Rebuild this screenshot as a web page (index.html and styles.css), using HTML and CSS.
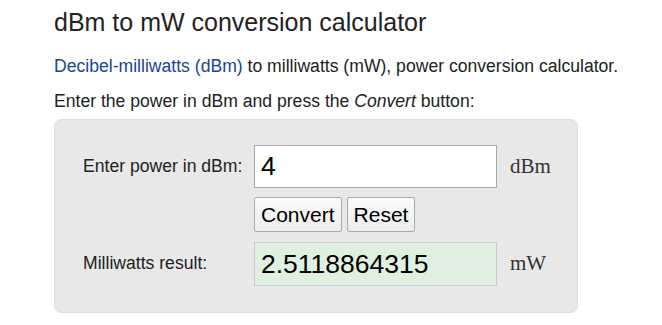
FILE: index.html
```html
<!DOCTYPE html>
<html>
<head>
    <title>dBm to mW conversion calculator</title>
    <link rel="stylesheet" href="styles.css">
</head>
<body>
    <div class="page">
        <h1>dBm to mW conversion calculator</h1>
        <p><a href="#">Decibel-milliwatts (dBm)</a> to milliwatts (mW), power conversion calculator.</p>
        <p>Enter the power in dBm and press the <i>Convert</i> button:</p>
        <form class="calc" onsubmit="convert(event)">
            <label for="dbm">Enter power in dBm:</label>
            <input type="text" id="dbm" class="field" value="4">
            <span class="unit">dBm</span>

            <span></span>
            <div class="buttons">
                <button type="submit">Convert</button>
                <button type="button" onclick="resetForm()">Reset</button>
            </div>
            <span></span>

            <label for="mw">Milliwatts result:</label>
            <input type="text" id="mw" class="field result" value="2.5118864315" readonly>
            <span class="unit">mW</span>
        </form>
    </div>

    <script>
        function convert(event) {
            event.preventDefault();
            const dbm = parseFloat(document.getElementById("dbm").value);
            const mw = Math.pow(10, dbm / 10);
            document.getElementById("mw").value = isNaN(mw) ? "" : +mw.toFixed(10);
        }

        function resetForm() {
            document.getElementById("dbm").value = "";
            document.getElementById("mw").value = "";
        }
    </script>
</body>
</html>
```
FILE: styles.css
```css
body {
    background-color: #fff;
    font-family: Arial, "Liberation Sans", sans-serif;
    color: #222;
    margin: 0;
}

.page {
    padding: 0 0 0 54px;
}

h1 {
    font-size: 25px;
    font-weight: normal;
    color: #222;
    margin: 0;
    padding-top: 8px;
    line-height: 28px;
}

p {
    font-size: 17.6px;
    margin: 0;
    line-height: 20px;
}

h1 + p {
    margin-top: 20px;
}

p + p {
    margin-top: 15px;
}

a {
    color: #1a4594;
    text-decoration: none;
}

.calc {
    width: 524px;
    box-sizing: border-box;
    margin-top: 8px;
    padding: 25px 0 26px 28px;
    background-color: #e8e8e8;
    border: 1px solid #ddd;
    border-radius: 8px;
    display: grid;
    grid-template-columns: 171px 243px auto;
    row-gap: 9px;
    align-items: center;
}

.calc label {
    font-size: 17.6px;
    color: #222;
}

.field {
    width: 243px;
    height: 43px;
    box-sizing: border-box;
    border: 1px solid #aaa;
    background-color: #fff;
    font-family: Arial, "Liberation Sans", sans-serif;
    font-size: 26.5px;
    color: #000;
    padding: 0 6px;
    outline: none;
}

.field.result {
    background-color: #e0f0e0;
    border-color: #ccc;
    height: 44px;
    margin-top: 1px;
}

.unit {
    font-family: "Times New Roman", "Liberation Serif", serif;
    font-size: 21px;
    color: #333;
    padding-left: 13px;
}

.buttons {
    display: flex;
    gap: 5px;
}

.buttons button {
    height: 35px;
    font-family: Arial, "Liberation Sans", sans-serif;
    font-size: 21px;
    color: #000;
    padding: 0 6px;
    background: linear-gradient(#fcfcfc, #ececec);
    border: 1px solid #aaa;
    border-radius: 2px;
    cursor: pointer;
}
```
